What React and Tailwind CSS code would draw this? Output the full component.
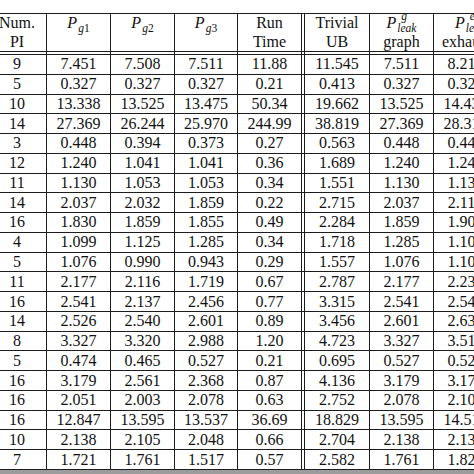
import React from "react";

const rows = [
  ["9", "7.451", "7.508", "7.511", "11.88", "11.545", "7.511", "8.213"],
  ["5", "0.327", "0.327", "0.327", "0.21", "0.413", "0.327", "0.327"],
  ["10", "13.338", "13.525", "13.475", "50.34", "19.662", "13.525", "14.431"],
  ["14", "27.369", "26.244", "25.970", "244.99", "38.819", "27.369", "28.317"],
  ["3", "0.448", "0.394", "0.373", "0.27", "0.563", "0.448", "0.448"],
  ["12", "1.240", "1.041", "1.041", "0.36", "1.689", "1.240", "1.240"],
  ["11", "1.130", "1.053", "1.053", "0.34", "1.551", "1.130", "1.130"],
  ["14", "2.037", "2.032", "1.859", "0.22", "2.715", "2.037", "2.113"],
  ["16", "1.830", "1.859", "1.855", "0.49", "2.284", "1.859", "1.901"],
  ["4", "1.099", "1.125", "1.285", "0.34", "1.718", "1.285", "1.101"],
  ["5", "1.076", "0.990", "0.943", "0.29", "1.557", "1.076", "1.102"],
  ["11", "2.177", "2.116", "1.719", "0.67", "2.787", "2.177", "2.231"],
  ["16", "2.541", "2.137", "2.456", "0.77", "3.315", "2.541", "2.541"],
  ["14", "2.526", "2.540", "2.601", "0.89", "3.456", "2.601", "2.631"],
  ["8", "3.327", "3.320", "2.988", "1.20", "4.723", "3.327", "3.512"],
  ["5", "0.474", "0.465", "0.527", "0.21", "0.695", "0.527", "0.527"],
  ["16", "3.179", "2.561", "2.368", "0.87", "4.136", "3.179", "3.179"],
  ["16", "2.051", "2.003", "2.078", "0.63", "2.752", "2.078", "2.104"],
  ["16", "12.847", "13.595", "13.537", "36.69", "18.829", "13.595", "14.512"],
  ["10", "2.138", "2.105", "2.048", "0.66", "2.704", "2.138", "2.138"],
  ["7", "1.721", "1.761", "1.517", "0.57", "2.582", "1.761", "1.823"],
];

const colW = [
  "w-[59px]",
  "w-[64px]",
  "w-[64px]",
  "w-[63px]",
  "w-[64px]",
  "w-[65px]",
  "w-[64px]",
  "w-[64px]",
];

function Row({ cells, className = "", cellClass = "" }) {
  return (
    <div className={`flex border-b border-[#1c1c1c] ${className}`}>
      {cells.map((c, i) => (
        <React.Fragment key={i}>
          <div
            className={`${colW[i]} shrink-0 border-r border-[#1c1c1c] ${cellClass}`}
          >
            {c}
          </div>
          {i === 4 && (
            <div className="w-[3px] shrink-0 border-r border-[#1c1c1c]" />
          )}
        </React.Fragment>
      ))}
    </div>
  );
}

function Pg({ n }) {
  return (
    <span className="whitespace-nowrap">
      <span className="italic">P</span>
      <span className="relative top-[4px] text-[11.5px] ml-[1px]">
        <span className="italic">g</span>
        {n}
      </span>
    </span>
  );
}

function Pleak({ sup }) {
  return (
    <span className="whitespace-nowrap">
      <span className="italic">P</span>
      <span className="relative inline-block text-[11.5px] italic leading-none top-[4px] ml-[1px]">
        <span className="absolute left-[4px] top-[-12px]">{sup}</span>
        leak
      </span>
    </span>
  );
}

export default function App() {
  const header = [
    <div className="flex flex-col items-center">
      <span>Num.</span>
      <span>PI</span>
    </div>,
    <div className="flex flex-col items-center">
      <Pg n="1" />
    </div>,
    <div className="flex flex-col items-center">
      <Pg n="2" />
    </div>,
    <div className="flex flex-col items-center">
      <Pg n="3" />
    </div>,
    <div className="flex flex-col items-center">
      <span>Run</span>
      <span>Time</span>
    </div>,
    <div className="flex flex-col items-center">
      <span>Trivial</span>
      <span>UB</span>
    </div>,
    <div className="flex flex-col items-center">
      <Pleak sup="g" />
      <span>graph</span>
    </div>,
    <div className="flex flex-col items-start">
      <span className="pl-[21px]">
        <Pleak sup="e" />
      </span>
      <span className="pl-[8px]">exhaustive</span>
    </div>,
  ];

  return (
    <div className="w-[474px] h-[474px] overflow-hidden bg-white flex flex-col font-['Liberation_Serif',serif] text-[16px] text-[#111]">
      <div className="pt-[13px] ml-[-12px] w-[520px]">
        <div className="border-t border-[#1c1c1c]">
          <Row
            cells={header}
            className="h-[38px]"
            cellClass="leading-[18.5px] whitespace-nowrap"
          />
          <Row cells={["", "", "", "", "", "", "", ""]} className="h-[3px]" />
          <div className="h-[415px] grid grid-rows-[repeat(21,minmax(0,1fr))]">
            {rows.map((r, i) => (
              <Row
                key={i}
                cells={r}
                cellClass="flex items-center justify-center leading-none whitespace-nowrap overflow-hidden"
              />
            ))}
          </div>
        </div>
      </div>
      <div className="flex-1 bg-[#9c9c9c]" />
    </div>
  );
}
